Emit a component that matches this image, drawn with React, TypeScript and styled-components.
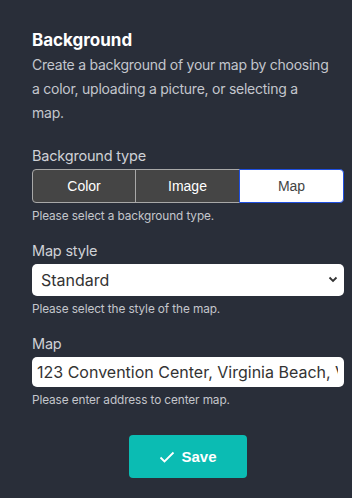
import styled, { createGlobalStyle } from "styled-components";

const Global = createGlobalStyle`
  html, body { margin: 0; padding: 0; background: #292e39; }
  body { font-family: Inter, "Noto Sans", sans-serif; }
  * { box-sizing: border-box; }
`;

const Panel = styled.div`
  width: 352px;
  height: 498px;
  padding: 29px 8px 0 32px;
  background: #292e39;
  color: #fff;
`;

const Title = styled.h2`
  margin: 0;
  font-size: 17px;
  font-weight: 700;
  line-height: 22px;
  color: #fff;
`;

const Intro = styled.p`
  margin: 2px 0 0;
  max-width: 304px;
  font-size: 14px;
  line-height: 24px;
  letter-spacing: -0.25px;
  color: #c3c6cd;
`;

const Field = styled.div<{ $top: number }>`
  margin-top: ${(p) => p.$top}px;
  display: flex;
  flex-direction: column;
  min-width: 0;
`;

const Label = styled.label`
  font-size: 14.5px;
  line-height: 18px;
  color: #cfd1d6;
  margin-bottom: 4px;
  letter-spacing: -0.2px;
`;

const Help = styled.div`
  margin-top: 6px;
  font-size: 11.8px;
  line-height: 14px;
  color: #c4c6cc;
  letter-spacing: -0.1px;
`;

const Segments = styled.div`
  display: grid;
  grid-template-columns: 1fr 1fr 1fr;
  height: 34px;
`;

const Segment = styled.button<{ $active?: boolean; $pos: "first" | "mid" | "last" }>`
  font-family: "Liberation Sans", Arial, sans-serif;
  font-size: 14px;
  border: 1px solid ${(p) => (p.$active ? "#1f4fe0" : "#a8a8a8")};
  background: ${(p) => (p.$active ? "#fff" : "#454545")};
  color: ${(p) => (p.$active ? "#444" : "#fff")};
  border-radius: ${(p) =>
    p.$pos === "first" ? "4px 0 0 4px" : p.$pos === "last" ? "0 4px 4px 0" : "0"};
  margin-left: ${(p) => (p.$pos === "first" ? "0" : "-1px")};
  padding: 0;
  cursor: pointer;
`;

const SelectBox = styled.div`
  position: relative;
  height: 32px;
  background: #fff;
  border-radius: 5px;
  display: flex;
  align-items: center;
  padding: 0 0 0 9px;
  font-size: 16px;
  color: #333;
`;

const Chevron = styled.svg`
  position: absolute;
  right: 6px;
  top: 12px;
`;

const TextBox = styled.div`
  width: 100%;
  height: 30px;
  background: #fff;
  border-radius: 5px;
  padding: 0 6px 0 5px;
  font-size: 16px;
  line-height: 30px;
  color: #333;
  overflow: hidden;
  white-space: nowrap;
`;

const Clip = styled.span`
  display: block;
  overflow: hidden;
`;

const Actions = styled.div`
  display: flex;
  justify-content: center;
  margin-top: 28px;
`;

const SaveButton = styled.button`
  width: 118px;
  height: 43px;
  background: #0bbcb3;
  border: none;
  border-radius: 4px;
  color: #fff;
  font-family: "Liberation Sans", Arial, sans-serif;
  font-size: 15px;
  font-weight: 700;
  display: flex;
  align-items: center;
  justify-content: center;
  gap: 6px;
`;

export default function App() {
  return (
    <>
      <Global />
      <Panel>
        <Title>Background</Title>
        <Intro>
          Create a background of your map by choosing a color, uploading a picture, or selecting a
          <br />
          map.
        </Intro>

        <Field $top={22}>
          <Label>Background type</Label>
          <Segments>
            <Segment $pos="first">Color</Segment>
            <Segment $pos="mid">Image</Segment>
            <Segment $pos="last" $active>
              Map
            </Segment>
          </Segments>
          <Help>Please select a background type.</Help>
        </Field>

        <Field $top={19}>
          <Label>Map style</Label>
          <SelectBox>
            Standard
            <Chevron width="10" height="7" viewBox="0 0 10 7">
              <path d="M1.5 1.5 L5 5 L8.5 1.5" fill="none" stroke="#333" strokeWidth="1.8" />
            </Chevron>
          </SelectBox>
          <Help>Please select the style of the map.</Help>
        </Field>

        <Field $top={19}>
          <Label>Map</Label>
          <TextBox>
            <Clip>123 Convention Center, Virginia Beach, VA</Clip>
          </TextBox>
          <Help>Please enter address to center map.</Help>
        </Field>

        <Actions>
          <SaveButton>
            <svg width="16" height="14" viewBox="0 0 16 14">
              <path d="M1.5 7.5 L5.5 11.5 L14.5 2.5" fill="none" stroke="#fff" strokeWidth="1.8" />
            </svg>
            Save
          </SaveButton>
        </Actions>
      </Panel>
    </>
  );
}
